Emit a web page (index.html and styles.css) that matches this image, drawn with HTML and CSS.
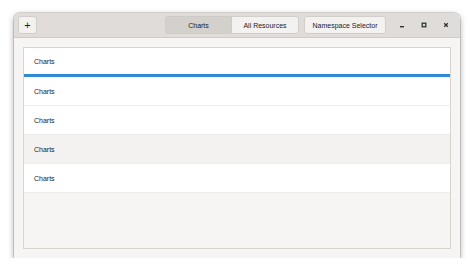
FILE: index.html
```html
<!DOCTYPE html>
<html>
<head>
<meta charset="utf-8">
<link rel="stylesheet" href="styles.css">
</head>
<body>
<div class="window">
  <header class="headerbar">
    <button class="btn btn-add">+</button>
    <div class="spacer"></div>
    <div class="tabs">
      <button class="tab active">Charts</button>
      <button class="tab">All Resources</button>
    </div>
    <button class="btn btn-ns">Namespace Selector</button>
    <div class="controls">
      <span class="ctl"><svg width="8" height="8" viewBox="0 0 8 8"><rect x="2" y="5" width="4" height="1.4" fill="#2e3436"/></svg></span>
      <span class="ctl"><svg width="8" height="8" viewBox="0 0 8 8"><rect x="2.2" y="2.2" width="3.6" height="3.6" fill="none" stroke="#2e3436" stroke-width="1.3"/></svg></span>
      <span class="ctl"><svg width="8" height="8" viewBox="0 0 8 8"><path d="M2.2 2.2 L5.8 5.8 M5.8 2.2 L2.2 5.8" stroke="#2e3436" stroke-width="1.3"/></svg></span>
    </div>
  </header>
  <main class="content">
    <div class="frame">
      <div class="row first">Charts</div>
      <div class="row">Charts</div>
      <div class="row">Charts</div>
      <div class="row hover">Charts</div>
      <div class="row">Charts</div>
    </div>
  </main>
</div>
</body>
</html>
```

FILE: styles.css
```css
html, body {
  margin: 0;
  padding: 0;
  background: #ffffff;
  font-family: "Liberation Sans", Arial, sans-serif;
  font-size: 7px;
  color: #1e2021;
}

.window {
  margin: 13px 0 0 14px;
  width: 446px;
  height: 245px;
  display: flex;
  flex-direction: column;
  background: #f6f5f4;
  border-radius: 6px 6px 0 0;
  box-shadow: 0 2px 6px rgba(0,0,0,0.35), 0 0 0 1px rgba(0,0,0,0.12);
  overflow: hidden;
}

.headerbar {
  height: 25px;
  flex: none;
  display: flex;
  align-items: center;
  padding: 0 0 0 4px;
  background: #dfdcd9;
  border-bottom: 1px solid #cfcbc7;
  box-sizing: border-box;
}

.spacer { flex: 1; }

.btn, .tab {
  font: inherit;
  color: #1e2021;
  height: 18px;
  padding: 0;
  border: 1px solid #d2ceca;
  border-radius: 3px;
  background: #f3f2f1;
  box-sizing: border-box;
}

.btn-add {
  width: 19px;
  font-size: 11px;
  line-height: 14px;
}

.tabs {
  display: flex;
}

.tab {
  width: 67px;
}
.tab.active {
  background: #d4d0cc;
  border-color: #cfcbc7;
  border-radius: 3px 0 0 3px;
}
.tab:last-child {
  border-radius: 0 3px 3px 0;
  border-left: none;
}

.btn-ns {
  width: 82px;
  margin-left: 5px;
}

.controls {
  display: flex;
  margin-left: 5px;
  margin-right: 3px;
}

.ctl {
  width: 22px;
  height: 18px;
  display: flex;
  align-items: center;
  justify-content: center;
}

.content {
  flex: 1;
  display: flex;
  padding: 9px 9px 9px 9px;
}

.frame {
  flex: 1;
  border: 1px solid #d8d4d0;
  background: #f6f5f4;
  display: flex;
  flex-direction: column;
}

.row {
  height: 28px;
  display: flex;
  align-items: center;
  padding-left: 10px;
  background: #ffffff;
  border-bottom: 1px solid #eeedec;
}

.row.first {
  height: 26px;
  border-bottom: 3px solid #2f8ad4;
}

.row.hover {
  background: #f3f2f1;
}
```
